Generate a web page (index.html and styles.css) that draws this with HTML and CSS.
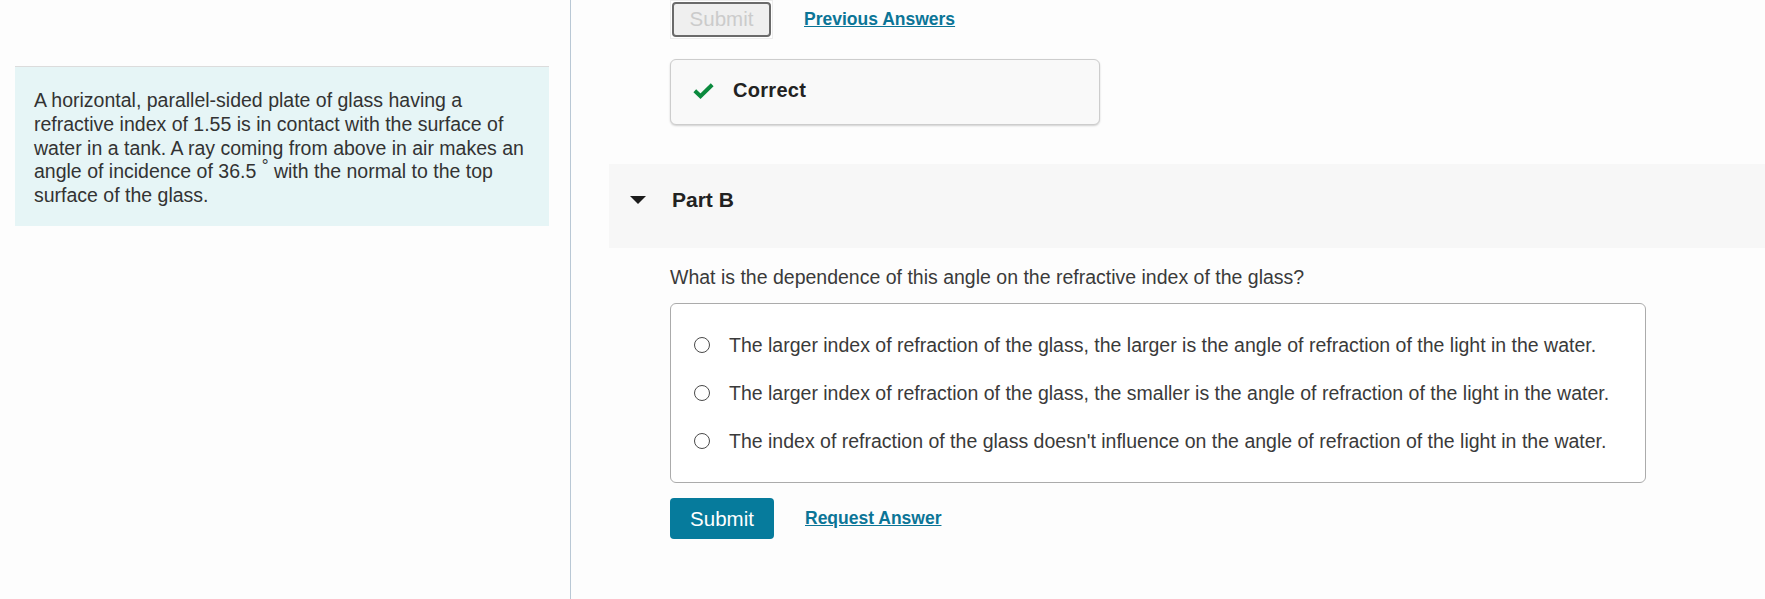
FILE: index.html
```html
<!DOCTYPE html>
<html lang="en">
<head>
  <meta charset="UTF-8">
  <title>Part B</title>
  <link rel="stylesheet" href="styles.css">
</head>
<body>
<div class="page">
  <div class="intro-col">
    <div class="intro">
      A horizontal, parallel-sided plate of glass having a refractive index of 1.55 is in contact with the surface of water in a tank. A ray coming from above in air makes an angle of incidence of 36.5 <span class="deg">&deg;</span> with the normal to the top surface of the glass.
    </div>
  </div>

  <div class="part-col">
    <div class="actions actions-top">
      <span class="btn-frame"><button class="btn btn-disabled" disabled>Submit</button></span>
      <a class="link" href="#">Previous Answers</a>
    </div>

    <div class="feedback">
      <svg class="check" width="21" height="16" viewBox="0 0 21 16">
        <path d="M1.8 7.8 L7.5 13.2 L19.2 1.8" fill="none" stroke="#0b8a3e" stroke-width="4"/>
      </svg>
      <span class="feedback-text">Correct</span>
    </div>

    <div class="part-head">
      <span class="caret"></span>
      <span class="part-title">Part B</span>
    </div>

    <p class="question">What is the dependence of this angle on the refractive index of the glass?</p>

    <div class="choices">
      <label class="choice"><span class="radio"></span>The larger index of refraction of the glass, the larger is the angle of refraction of the light in the water.</label>
      <label class="choice"><span class="radio"></span>The larger index of refraction of the glass, the smaller is the angle of refraction of the light in the water.</label>
      <label class="choice"><span class="radio"></span>The index of refraction of the glass doesn't influence on the angle of refraction of the light in the water.</label>
    </div>

    <div class="actions actions-bottom">
      <button class="btn btn-primary">Submit</button>
      <a class="link" href="#">Request Answer</a>
    </div>
  </div>
</div>
</body>
</html>
```

FILE: styles.css
```css
body {
  margin: 0;
  font-family: "Liberation Sans", Arial, sans-serif;
  color: #333;
  background-color: #fff;
}

.page {
  display: flex;
  min-height: 599px;
}

.intro-col {
  width: 571px;
  border-right: 1px solid #b9c8d5;
  padding-top: 66px;
  box-sizing: border-box;
  padding-left: 15px;
  padding-right: 21px;
  background-color: #fdfdfd;
}

.intro {
  background-color: #e6f5f6;
  border-top: 1px solid #dcdcdc;
  padding: 22px 16px 18px 19px;
  font-size: 19.5px;
  line-height: 23.75px;
  color: #333;
}

.deg {
  display: inline-block;
  font-size: 17px;
  line-height: 10px;
  transform: translateY(-7px);
}

.part-col {
  flex: 1;
  padding-left: 38px;
  background-color: #fdfdfd;
}

.actions {
  display: flex;
  align-items: center;
  gap: 31px;
  margin-left: 61px;
}

.actions-top {
  height: 38px;
}

.btn-frame {
  border: 1px solid #ececec;
  background-color: #fff;
  padding: 1px;
  display: flex;
}

.btn {
  font-family: "Liberation Sans", Arial, sans-serif;
  font-size: 20.5px;
  border-radius: 4px;
  cursor: pointer;
}

.btn-disabled {
  width: 99px;
  height: 35px;
  background-color: #efefef;
  border: 2px solid #6a6a6a;
  color: #cbcbcb;
  padding: 0;
}

.btn-primary {
  width: 104px;
  height: 41px;
  background-color: #067b9c;
  border: none;
  color: #fff;
  padding: 0;
}

.link {
  color: #0b7597;
  font-weight: bold;
  font-size: 17.5px;
  text-decoration: underline;
}

.feedback {
  margin: 21px 0 0 61px;
  width: 430px;
  height: 66px;
  box-sizing: border-box;
  border: 1px solid #cdcdcd;
  border-radius: 6px;
  background-color: #f9f9f9;
  box-shadow: 0 1px 2px rgba(0, 0, 0, 0.18);
  display: flex;
  align-items: center;
  padding: 0 0 3px 22px;
}

.check {
  margin-right: 19px;
}

.feedback-text {
  font-size: 20px;
  font-weight: bold;
  color: #222;
  letter-spacing: 0.3px;
}

.part-head {
  margin-top: 39px;
  height: 84px;
  box-sizing: border-box;
  padding-bottom: 12px;
  background-color: #f7f7f7;
  display: flex;
  align-items: center;
}

.caret {
  width: 0;
  height: 0;
  border-left: 8px solid transparent;
  border-right: 8px solid transparent;
  border-top: 8px solid #1c1c1c;
  margin-left: 21px;
  margin-right: 26px;
}

.part-title {
  font-size: 21px;
  font-weight: bold;
  color: #222;
}

.question {
  margin: 17px 0 0 61px;
  font-size: 19.5px;
  line-height: 24px;
  color: #3a3a3a;
}

.choices {
  margin: 14px 0 0 61px;
  width: 976px;
  box-sizing: border-box;
  border: 1px solid #ababab;
  border-radius: 6px;
  background-color: #fff;
  padding: 29px 20px 29px 23px;
  display: flex;
  flex-direction: column;
  gap: 24px;
}

.choice {
  display: flex;
  align-items: center;
  font-size: 19.5px;
  line-height: 24px;
  color: #3a3a3a;
}

.radio {
  width: 14px;
  height: 14px;
  border: 1.5px solid #4a4a4a;
  border-radius: 50%;
  margin-right: 19px;
  flex-shrink: 0;
}

.actions-bottom {
  margin-top: 15px;
}
```
